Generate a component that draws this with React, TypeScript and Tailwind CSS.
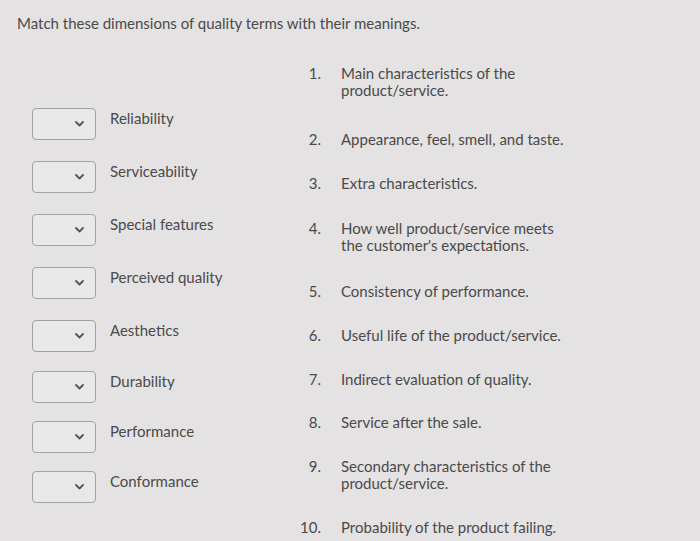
import React from 'react';

const terms = [
  { label: 'Reliability', cls: 'mt-0' },
  { label: 'Serviceability', cls: 'mt-[21px]' },
  { label: 'Special features', cls: 'mt-[21px]' },
  { label: 'Perceived quality', cls: 'mt-[21px]' },
  { label: 'Aesthetics', cls: 'mt-[21px]' },
  { label: 'Durability', cls: 'mt-[19px]' },
  { label: 'Performance', cls: 'mt-[18px]' },
  { label: 'Conformance', cls: 'mt-[18px]' },
];

const meanings = [
  { n: '1.', text: ['Main characteristics of the', 'product/service.'], cls: 'mt-0' },
  { n: '2.', text: ['Appearance, feel, smell, and taste.'], cls: 'mt-[32px]' },
  { n: '3.', text: ['Extra characteristics.'], cls: 'mt-[27px]' },
  { n: '4.', text: ['How well product/service meets', "the customer's expectations."], cls: 'mt-[28px]' },
  { n: '5.', text: ['Consistency of performance.'], cls: 'mt-[29px]' },
  { n: '6.', text: ['Useful life of the product/service.'], cls: 'mt-[27px]' },
  { n: '7.', text: ['Indirect evaluation of quality.'], cls: 'mt-[27px]' },
  { n: '8.', text: ['Service after the sale.'], cls: 'mt-[26px]' },
  { n: '9.', text: ['Secondary characteristics of the', 'product/service.'], cls: 'mt-[27px]' },
  { n: '10.', text: ['Probability of the product failing.'], cls: 'mt-[27px]' },
];

function SelectBox() {
  return (
    <div className="w-[64px] h-[32px] shrink-0 border border-[#a3a3a3] rounded-[4px] bg-[#e9e8e8] flex items-center pl-[42px]">
      <svg width="9" height="6" viewBox="0 0 9 6" fill="none">
        <path d="M1 1l3.5 3.5L8 1" stroke="#555" strokeWidth="1.8" strokeLinecap="round" strokeLinejoin="round" />
      </svg>
    </div>
  );
}

export default function App() {
  return (
    <div className="w-[700px] h-[541px] overflow-hidden bg-[#e4e2e3] text-[#4a4a4a] font-['Lato',sans-serif] text-[15px] leading-[17px]">
      <p className="pt-[15px] pl-[17px]">Match these dimensions of quality terms with their meanings.</p>

      <div className="flex items-start">
        {/* terms with dropdowns */}
        <div className="w-[300px] shrink-0 pl-[32px] pt-[76px]">
          {terms.map((t) => (
            <div key={t.label} className={'flex items-start gap-[14px] ' + t.cls}>
              <SelectBox />
              <span className="pt-[2px]">{t.label}</span>
            </div>
          ))}
        </div>

        {/* numbered meanings */}
        <div className="pt-[33px]">
          {meanings.map((m) => (
            <div key={m.n} className={'flex items-start ' + m.cls}>
              <span className="w-[21px] text-right">{m.n}</span>
              <div className="ml-[20px]">
                {m.text.map((line) => (
                  <div key={line}>{line}</div>
                ))}
              </div>
            </div>
          ))}
        </div>
      </div>
    </div>
  );
}
